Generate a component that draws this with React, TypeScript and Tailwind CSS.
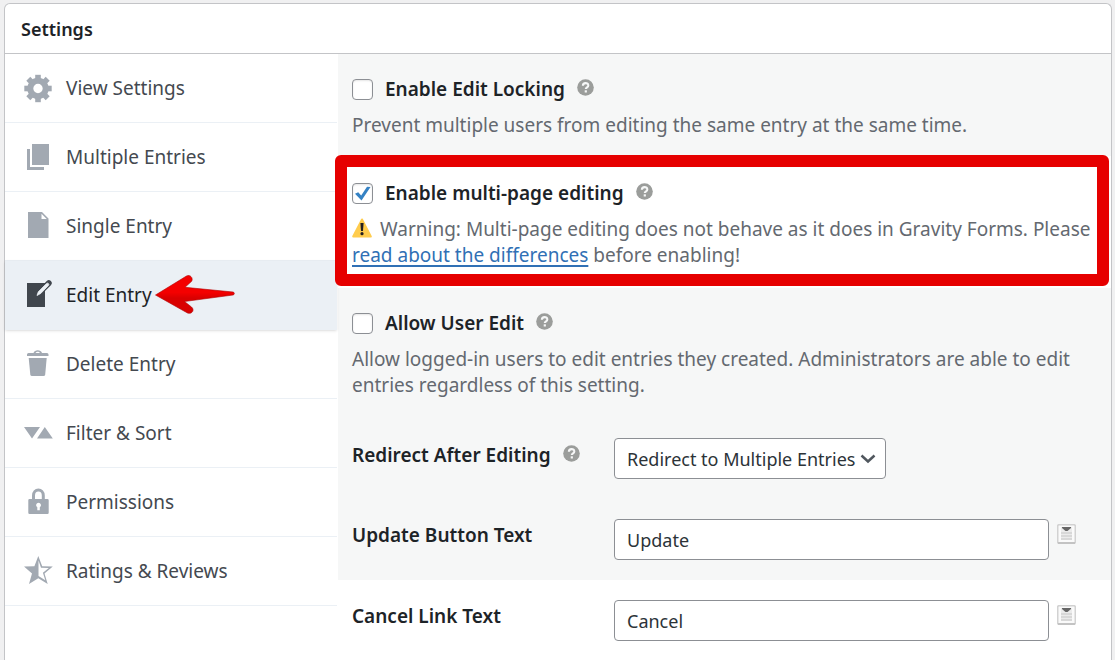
import type { ReactNode } from "react";

type NavItem = { label: string; icon: ReactNode; active?: boolean };

const navItems: NavItem[] = [
  {
    label: "View Settings",
    icon: (
      <>
        <circle cx="14" cy="14.5" r="7.7" fill="none" stroke="currentColor" strokeWidth="6" />
        {[0, 45, 90, 135, 180, 225, 270, 315].map((angle) => (
          <path key={angle} d="M11.2 5.2V.8h5.6v4.4z" transform={`rotate(${angle} 14 14.5)`} />
        ))}
      </>
    ),
  },
  {
    label: "Multiple Entries",
    icon: <path d="M8 1h17v21H8zM3 6h3v18h14v3H3z" />,
  },
  {
    label: "Single Entry",
    icon: <path fillRule="evenodd" d="M4 0h14l6.5 6.5V26H4zM17.5 1.8v5.2h5.2z" />,
  },
  {
    label: "Edit Entry",
    active: true,
    icon: (
      <>
        <path d="M3 2h18v24H3z" />
        <path d="M16.500 6.500L23-.2q1.800-1.800 3.600 0l.5.5q1.800 1.800 0 3.600L19.500 11.500z" />
        <path d="M13 14.500l1.300-3.700L22.500 2.600q1-.9 1.900 0t0 1.900l-7.700 8z" fill="#ebf0f5" stroke="#ebf0f5" strokeWidth=".8" />
      </>
    ),
  },
  {
    label: "Delete Entry",
    icon: (
      <>
        <path d="M3 4.500q0-1.500 1.500-1.500H9.500C10.500-.8 17-.8 18 3h5q1.500 0 1.500 1.500V6H3zM11.500 3h4.500c-1-1.600-3.500-1.600-4.500 0z" fillRule="evenodd" />
        <path d="M4.700 8h18l-1.500 16.500q-.2 1.500-1.700 1.500H8q-1.500 0-1.700-1.500z" />
      </>
    ),
  },
  {
    label: "Filter & Sort",
    icon: <path d="M0 8h16l-8 11.500zM13 19.500l7.800-11.500 8 11.500z" />,
  },
  {
    label: "Permissions",
    icon: (
      <>
        <path d="M9.500 12V7.500a4.900 5.500 0 0 1 9.800 0V12" fill="none" stroke="currentColor" strokeWidth="3" />
        <path
          fillRule="evenodd"
          d="M5.500 11h18q1.200 0 1.200 1.200v12.600q0 1.200-1.200 1.200h-18q-1.200 0-1.200-1.200V12.200Q4.300 11 5.500 11zM14.500 14.700a2.500 2.500 0 0 0-1.200 4.600v3h2.500v-3a2.500 2.500 0 0 0-1.300-4.600z"
        />
      </>
    ),
  },
  {
    label: "Ratings & Reviews",
    icon: (
      <path
        fillRule="evenodd"
        d="M14.300-1L18.200 9.200l10.600.4-8.300 6.800 3.200 10.600-9.400-5.800L5 27l3-10.600L0 9.600l10.400-.4zM14.500 3.500v15.600l6.800 4.100-2.400-7.500 5.900-4.600-7.800-.3z"
      />
    ),
  },
];

function HelpIcon() {
  return (
    <button type="button" aria-label="Help" className="mb-1 shrink-0">
      <svg viewBox="0 0 17 17" className="block size-[17px]">
        <circle cx="8.500" cy="8.500" r="8.300" fill="#9b9d9b" />
        <path
          d="M5.900 6.800C5.900 3.300 11.300 3.400 11.300 6.400c0 1.900-2.500 1.900-2.500 3.700"
          fill="none"
          stroke="#f6f7f7"
          strokeWidth="2.100"
        />
        <path d="M7.700 11.300h2.200v2.200H7.700z" fill="#f6f7f7" />
      </svg>
    </button>
  );
}

function MergeTagIcon() {
  return (
    <button type="button" aria-label="Insert merge tag" className="mt-[5px] shrink-0 self-start">
      <svg viewBox="0 0 19 20" className="block h-5 w-[19px]">
        <rect x=".7" y=".7" width="17.600" height="18.600" rx="1.500" fill="#fafafa" stroke="#d2d2d2" strokeWidth="1.600" />
        <path d="M1 18h17v2H1z" fill="#c3c3c3" />
        <path d="M4 3h11v13H4z" fill="#ebebeb" />
        <path d="M5 3h9v1L10.500 7h-2L5 4z" fill="#666" />
        <path d="M4 9h11M4 12h11M4 15h11" stroke="#c6c6c6" strokeWidth="1.200" />
      </svg>
    </button>
  );
}

function Arrow() {
  return (
    <svg
      viewBox="0 0 82 42"
      className="pointer-events-none absolute top-[13px] left-[149px] h-[42px] w-[82px]"
      aria-hidden="true"
    >
      <defs>
        <linearGradient id="arrow-fill" x1="0" y1="0" x2="0" y2="1">
          <stop offset=".45" stopColor="#f40000" />
          <stop offset=".6" stopColor="#d90000" />
        </linearGradient>
      </defs>
      <path
        d="M1.500 21L32.500 2c3.500-2 7 2 5.200 5.200L31 13.300l48 4.700c1.800.2 1.800 2.800 0 3L30.500 27.500l7 5.500c3.500 3 .5 7.500-4 6z"
        fill="url(#arrow-fill)"
        stroke="#b00000"
        strokeWidth=".6"
      />
    </svg>
  );
}

type ToggleProps = { id: string; label: string; checked?: boolean; children: ReactNode };

function Toggle({ id, label, checked, children }: ToggleProps) {
  return (
    <>
      <div className="flex h-[26px] items-center">
        <span className="relative mr-3 block size-[21px]">
          <input
            id={id}
            type="checkbox"
            defaultChecked={checked}
            className="peer block size-[21px] appearance-none rounded border border-[#8c8f94] bg-white shadow-[inset_0_1px_2px_rgba(0,0,0,0.1)]"
          />
          <svg
            viewBox="0 0 21 21"
            className="pointer-events-none absolute inset-0 hidden size-[21px] peer-checked:block"
          >
            <path d="M3 10.800l3.200-1.600 3 3.200 5.800-8.600 3.500.2-9 13.500z" fill="#3582c4" />
          </svg>
        </span>
        <label htmlFor={id} className="mr-3 font-semibold text-[#1d2327]">
          {label}
        </label>
        <HelpIcon />
      </div>
      <p className="mt-2.5 text-[#646970]">{children}</p>
    </>
  );
}

function TextRow({ id, label, value }: { id: string; label: string; value: string }) {
  return (
    <div className="flex pt-5 pr-[35px] pl-3.5">
      <label htmlFor={id} className="w-[262px] shrink-0 pt-[3px] font-semibold text-[#1d2327]">
        {label}
      </label>
      <input
        id={id}
        type="text"
        defaultValue={value}
        className="mr-2 h-[41px] min-w-0 flex-1 rounded border border-[#8c8f94] bg-white px-3 text-[18px] text-[#2c3338]"
      />
      <MergeTagIcon />
    </div>
  );
}

export default function App() {
  return (
    <main className="flex min-h-screen flex-col bg-[#f0f0f1] pt-[3px] pr-[3px] pl-1 font-['Noto_Sans','Open_Sans',sans-serif] text-[19px] leading-[26px]">
      <div className="flex flex-1 flex-col rounded-t-md border border-b-0 border-[#c3c4c7] bg-white">
        <h2 className="flex h-[50px] items-center border-b border-[#c3c4c7] px-4 text-[18px] font-semibold text-[#1d2327]">
          Settings
        </h2>
        <div className="flex flex-1">
          <nav className="w-[333px] shrink-0 pr-px">
            <ul>
              {navItems.map((item) => (
                <li
                  key={item.label}
                  className={`relative h-[69px] border-b border-[#ebf0f5] ${
                    item.active ? "bg-[#ebf0f5] text-[#1d2327] shadow-sm" : "text-[#444950]"
                  }`}
                >
                  <a href="#" className="flex h-full items-center gap-3.5 pl-[19px]">
                    <svg
                      viewBox="0 0 28 28"
                      fill="currentColor"
                      className={`size-7 overflow-visible ${item.active ? "text-[#40464d]" : "text-[#a2a9b2]"}`}
                    >
                      {item.icon}
                    </svg>
                    {item.label}
                  </a>
                  {item.active ? <Arrow /> : null}
                </li>
              ))}
            </ul>
          </nav>

          <form className="min-w-0 flex-1">
            <section className="bg-[#f6f7f7] px-3.5 pt-[22px] pb-[18px]">
              <Toggle id="edit-locking" label="Enable Edit Locking">
                Prevent multiple users from editing the same entry at the same time.
              </Toggle>
            </section>

            <section className="relative bg-white px-3.5 pt-6 pb-5">
              <Toggle id="multi-page" label="Enable multi-page editing" checked>
                <svg viewBox="0 0 20 20" className="-mt-1 mr-2 inline size-5 align-[-2px]" aria-hidden="true">
                  <path
                    d="M10 1.500L18.800 18.500H1.200z"
                    fill="#ffcc4d"
                    stroke="#ffcc4d"
                    strokeWidth="2"
                    strokeLinejoin="round"
                  />
                  <path d="M8.400 5h3.200l-.6 8H9z" fill="#231f20" />
                  <circle cx="10" cy="15.700" r="1.600" fill="#231f20" />
                </svg>
                Warning: Multi-page editing does not behave as it does in Gravity Forms. Please{" "}
                <a href="#" className="text-[#3070b5] underline decoration-2 underline-offset-[3px]">
                  read about the differences
                </a>{" "}
                before enabling!
              </Toggle>
              <div className="pointer-events-none absolute -top-px right-0.5 bottom-0.5 -left-[3px] rounded-md border-12 border-[#e60000]" />
            </section>

            <section className="bg-[#f6f7f7] pt-[22px] pb-5">
              <div className="px-3.5 pb-5">
                <Toggle id="user-edit" label="Allow User Edit">
                  Allow logged-in users to edit entries they created. Administrators are able to edit
                  entries regardless of this setting.
                </Toggle>
              </div>

              <div className="flex pt-5 pb-5 pl-3.5">
                <div className="flex h-[34px] w-[262px] shrink-0 items-center">
                  <label htmlFor="redirect" className="mr-3 font-semibold text-[#1d2327]">
                    Redirect After Editing
                  </label>
                  <HelpIcon />
                </div>
                <div className="relative w-[272px]">
                  <select
                    id="redirect"
                    className="h-[41px] w-full appearance-none rounded border border-[#8c8f94] bg-white pr-6 pl-3 text-[18px] text-[#2c3338]"
                  >
                    <option>Redirect to Multiple Entries</option>
                  </select>
                  <svg
                    viewBox="0 0 16 10"
                    className="pointer-events-none absolute top-4 right-2.5 h-2.5 w-4"
                  >
                    <path d="M1.500 1.500L8 7.500l6.500-6" fill="none" stroke="#50575e" strokeWidth="2.500" />
                  </svg>
                </div>
              </div>

              <TextRow id="update-text" label="Update Button Text" value="Update" />
            </section>

            <TextRow id="cancel-text" label="Cancel Link Text" value="Cancel" />
          </form>
        </div>
      </div>
    </main>
  );
}
